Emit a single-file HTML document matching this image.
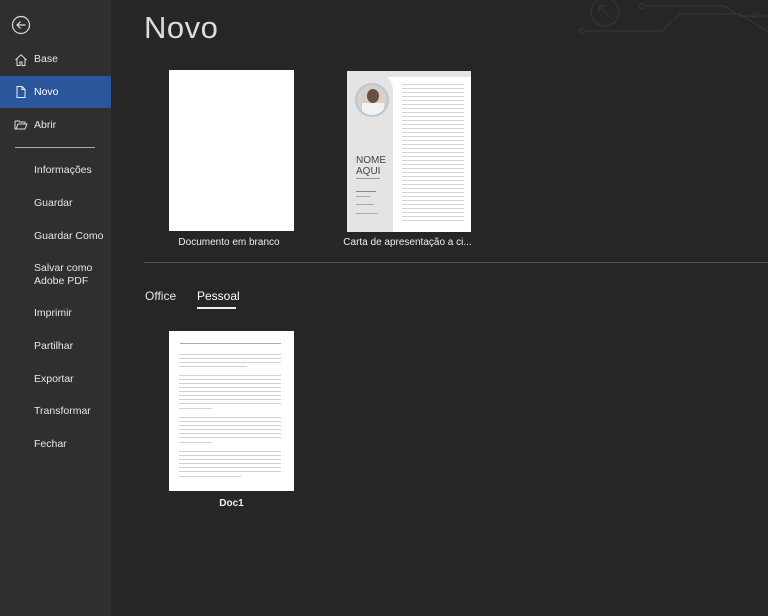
<!DOCTYPE html>
<html><head><meta charset="utf-8"><style>
*{margin:0;padding:0;box-sizing:border-box}
body{width:768px;height:616px;background:#262626;font-family:"Segoe UI","Liberation Sans",sans-serif;color:#e8e8e8;position:relative;overflow:hidden}
#side{position:absolute;left:0;top:0;width:111px;height:616px;background:#2f2f2f}
.it{position:absolute;left:34px;font-size:10.5px;color:#e6e6e6;line-height:13px}
.ico{position:absolute;left:14px}
.l{position:absolute;height:1px;background:#c8c8c8}
.r{position:absolute;height:1px;background:#d2d2d2}
</style></head><body>
<div id="side">
<svg style="position:absolute;left:11px;top:15px" width="20" height="20" viewBox="0 0 20 20"><circle cx="10" cy="10" r="8.5" fill="none" stroke="#ddd" stroke-width="1.2"/><path d="M14.5 10H6M9.5 6.5L6 10l3.5 3.5" fill="none" stroke="#ddd" stroke-width="1.2"/></svg>
<svg class="ico" style="top:53px" width="14" height="14" viewBox="0 0 14 14"><path d="M1.5 7L7 1.8 12.5 7M3 5.8V12.5h3V9h2v3.5h3V5.8" fill="none" stroke="#ddd" stroke-width="1"/></svg>
<div class="it" style="top:53px">Base</div>
<div style="position:absolute;left:0;top:76px;width:111px;height:32px;background:#2b579a"></div>
<svg class="ico" style="top:85px" width="14" height="14" viewBox="0 0 14 14"><path d="M3 1.5h5l3 3v8H3z M8 1.5v3h3" fill="none" stroke="#eee" stroke-width="1"/></svg>
<div class="it" style="top:86px;color:#fff">Novo</div>
<svg class="ico" style="top:118px" width="14" height="14" viewBox="0 0 14 14"><path d="M1 3h4l1 1h5v2 M1 3v8h10l2-5H4l-2 5" fill="none" stroke="#ddd" stroke-width="1"/></svg>
<div class="it" style="top:119px">Abrir</div>
<div style="position:absolute;left:15px;top:147px;width:80px;height:1px;background:#aaa"></div>
<div class="it" style="top:164px">Informações</div>
<div class="it" style="top:197px">Guardar</div>
<div class="it" style="top:230px">Guardar Como</div>
<div class="it" style="top:262px">Salvar como<br>Adobe PDF</div>
<div class="it" style="top:307px">Imprimir</div>
<div class="it" style="top:340px">Partilhar</div>
<div class="it" style="top:373px">Exportar</div>
<div class="it" style="top:405px">Transformar</div>
<div class="it" style="top:438px">Fechar</div>
</div>
<svg style="position:absolute;left:560px;top:0" width="208" height="60" viewBox="0 0 208 60" fill="none" stroke="#323232" stroke-width="1.5"><circle cx="45" cy="12" r="14"/><path d="M50 17L39 6M39 6v7M39 6h7"/><circle cx="22" cy="31" r="2.5"/><path d="M24 31h78l18-17h60l28 18"/><circle cx="82" cy="6" r="2.5"/><path d="M84 6h80l16 10 28 0"/><circle cx="195" cy="15" r="2.5"/></svg>
<div style="position:absolute;left:144px;top:10px;font-size:31px;color:#dcdcdc;letter-spacing:0.5px">Novo</div>
<div style="position:absolute;left:169px;top:70px;width:125px;height:161px;background:#fff"></div>
<div style="position:absolute;left:144px;top:237px;width:170px;text-align:center;font-size:10px;color:#eee">Documento em branco</div>
<div style="position:absolute;left:347px;top:71px;width:124px;height:161px;background:#fff;overflow:hidden">
 <div style="position:absolute;left:0;top:0;width:124px;height:6px;background:#e4e4e4"></div>
 <div style="position:absolute;left:0;top:0;width:46px;height:161px;background:#e4e4e4;border-top-right-radius:20px"></div>
 <div style="position:absolute;left:8px;top:12px;width:34px;height:34px;border-radius:50%;background:#d8d0c8;border:2px solid #b8c8d4;overflow:hidden"><div style="position:absolute;left:10px;top:4px;width:12px;height:14px;border-radius:50%;background:#6a5040"></div><div style="position:absolute;left:5px;top:18px;width:22px;height:12px;background:#f2f2f2"></div></div>
 <div style="position:absolute;left:9px;top:84px;font-size:10px;line-height:11px;color:#444">NOME<br>AQUI</div>
 <div style="position:absolute;left:9px;top:107px;width:24px;height:1px;background:#999"></div>
 <div style="position:absolute;left:9px;top:120px;width:20px;height:1px;background:#888"></div>
 <div style="position:absolute;left:9px;top:125px;width:14px;height:1px;background:#aaa"></div>
 <div style="position:absolute;left:9px;top:133px;width:18px;height:1px;background:#aaa"></div>
 <div style="position:absolute;left:9px;top:142px;width:22px;height:1px;background:#d9a070"></div>
 <div style="position:absolute;left:55px;top:10px;width:62px;height:140px;background:repeating-linear-gradient(#fff 0 3px,#d4d4d4 3px 4px)"></div>
</div>
<div style="position:absolute;left:330px;top:237px;width:155px;text-align:center;font-size:10px;color:#eee">Carta de apresentação a ci...</div>
<div style="position:absolute;left:144px;top:262px;width:624px;height:1px;background:#555"></div>
<div style="position:absolute;left:145px;top:289px;font-size:12px;color:#e6e6e6">Office</div>
<div style="position:absolute;left:197px;top:289px;font-size:12px;color:#fff">Pessoal</div>
<div style="position:absolute;left:197px;top:307px;width:39px;height:2px;background:#eee"></div>
<div style="position:absolute;left:169px;top:331px;width:125px;height:160px;background:#fff">
<div class="l" style="left:11px;top:12px;width:101px;background:#aaa"></div>
<div class="r" style="left:10px;top:23px;width:102px"></div><div class="r" style="left:10px;top:27px;width:102px"></div><div class="r" style="left:10px;top:31px;width:102px"></div><div class="r" style="left:10px;top:35px;width:68px"></div>
<div class="r" style="left:10px;top:44px;width:102px"></div><div class="r" style="left:10px;top:48px;width:102px"></div><div class="r" style="left:10px;top:52px;width:102px"></div><div class="r" style="left:10px;top:56px;width:102px"></div><div class="r" style="left:10px;top:60px;width:102px"></div><div class="r" style="left:10px;top:64px;width:102px"></div><div class="r" style="left:10px;top:68px;width:102px"></div><div class="r" style="left:10px;top:72px;width:102px"></div><div class="r" style="left:10px;top:77px;width:33px"></div>
<div class="r" style="left:10px;top:86px;width:102px"></div><div class="r" style="left:10px;top:90px;width:102px"></div><div class="r" style="left:10px;top:94px;width:102px"></div><div class="r" style="left:10px;top:98px;width:102px"></div><div class="r" style="left:10px;top:102px;width:102px"></div><div class="r" style="left:10px;top:106px;width:102px"></div><div class="r" style="left:10px;top:111px;width:33px"></div>
<div class="r" style="left:10px;top:120px;width:102px"></div><div class="r" style="left:10px;top:124px;width:102px"></div><div class="r" style="left:10px;top:128px;width:102px"></div><div class="r" style="left:10px;top:132px;width:102px"></div><div class="r" style="left:10px;top:136px;width:102px"></div><div class="r" style="left:10px;top:140px;width:102px"></div><div class="r" style="left:10px;top:145px;width:62px"></div>
</div>
<div style="position:absolute;left:169px;top:498px;width:125px;text-align:center;font-size:10px;font-weight:bold;color:#eee">Doc1</div>
</body></html>
